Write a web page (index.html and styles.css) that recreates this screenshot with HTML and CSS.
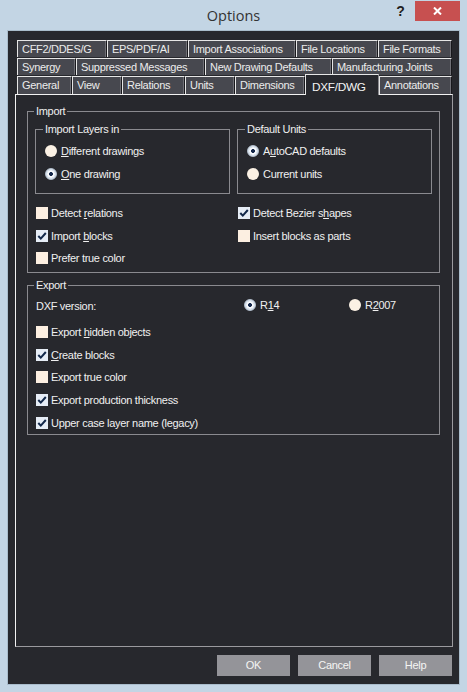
FILE: index.html
```html
<!DOCTYPE html>
<html>
<head>
<meta charset="utf-8">
<title>Options</title>
<link rel="stylesheet" href="styles.css">
</head>
<body>
<div class="window">
  <div class="titlebar">
    <div></div>
    <div class="title">Options</div>
    <div class="controls">
      <span class="help">?</span>
      <span class="close"><svg width="9" height="8" viewBox="0 0 9 8"><path d="M1 0.5 L8 7.5 M8 0.5 L1 7.5" stroke="#fff" stroke-width="2" fill="none"/></svg></span>
    </div>
  </div>
  <div class="client">
    <div class="tabstrip">
      <div class="tabrow">
        <div class="tab w90">CFF2/DDES/G</div>
        <div class="tab w81">EPS/PDF/AI</div>
        <div class="tab w108">Import Associations</div>
        <div class="tab w82">File Locations</div>
        <div class="tab w74">File Formats</div>
      </div>
      <div class="tabrow">
        <div class="tab w59">Synergy</div>
        <div class="tab w129">Suppressed Messages</div>
        <div class="tab w127">New Drawing Defaults</div>
        <div class="tab w120">Manufacturing Joints</div>
      </div>
      <div class="tabrow last">
        <div class="tab w55">General</div>
        <div class="tab w50">View</div>
        <div class="tab w63">Relations</div>
        <div class="tab w50">Units</div>
        <div class="tab w70">Dimensions</div>
        <div class="tab w74 selected">DXF/DWG</div>
        <div class="tab w73">Annotations</div>
      </div>
    </div>
    <div class="panel">
      <div class="group import">
        <span class="glabel">Import</span>
        <div class="subgroups">
          <div class="group sub">
            <span class="glabel">Import Layers in</span>
            <div class="opt"><span class="radio"></span><span><u>D</u>ifferent drawings</span></div>
            <div class="opt"><span class="radio on"></span><span><u>O</u>ne drawing</span></div>
          </div>
          <div class="group sub">
            <span class="glabel">Default Units</span>
            <div class="opt"><span class="radio on"></span><span>A<u>u</u>toCAD defaults</span></div>
            <div class="opt"><span class="radio"></span><span>Current units</span></div>
          </div>
        </div>
        <div class="checks">
          <div class="chk"><span class="box"></span><span>Detect <u>r</u>elations</span></div>
          <div class="chk"><span class="box on"><svg width="12" height="12" viewBox="0 0 12 12"><path d="M2.3 6 L4.8 8.6 L9.8 3" stroke="#12284a" stroke-width="2" fill="none"/></svg></span><span>Detect Bezier s<u>h</u>apes</span></div>
          <div class="chk"><span class="box on"><svg width="12" height="12" viewBox="0 0 12 12"><path d="M2.3 6 L4.8 8.6 L9.8 3" stroke="#12284a" stroke-width="2" fill="none"/></svg></span><span>Import <u>b</u>locks</span></div>
          <div class="chk"><span class="box"></span><span>Insert blocks as parts</span></div>
          <div class="chk"><span class="box"></span><span>Prefer true color</span></div>
        </div>
      </div>
      <div class="group export">
        <span class="glabel">Export</span>
        <div class="dxfrow">
          <span>DXF version:</span>
          <div class="opt"><span class="radio on"></span><span>R<u>1</u>4</span></div>
          <div class="opt"><span class="radio"></span><span>R<u>2</u>007</span></div>
        </div>
        <div class="chk"><span class="box"></span><span>Export <u>h</u>idden objects</span></div>
        <div class="chk"><span class="box on"><svg width="12" height="12" viewBox="0 0 12 12"><path d="M2.3 6 L4.8 8.6 L9.8 3" stroke="#12284a" stroke-width="2" fill="none"/></svg></span><span><u>C</u>reate blocks</span></div>
        <div class="chk"><span class="box"></span><span>Export true color</span></div>
        <div class="chk"><span class="box on"><svg width="12" height="12" viewBox="0 0 12 12"><path d="M2.3 6 L4.8 8.6 L9.8 3" stroke="#12284a" stroke-width="2" fill="none"/></svg></span><span>Export production thickness</span></div>
        <div class="chk"><span class="box on"><svg width="12" height="12" viewBox="0 0 12 12"><path d="M2.3 6 L4.8 8.6 L9.8 3" stroke="#12284a" stroke-width="2" fill="none"/></svg></span><span>Upper case layer name (legacy)</span></div>
      </div>
    </div>
    <div class="buttons">
      <div class="btn">OK</div>
      <div class="btn">Cancel</div>
      <div class="btn">Help</div>
    </div>
  </div>
</div>
</body>
</html>
```
FILE: styles.css
```css
html, body {
  margin: 0;
  padding: 0;
  background: #c3d5e4;
}
.window {
  width: 467px;
  height: 692px;
  background: #c3d5e4;
  font-family: "Liberation Sans", Arial, sans-serif;
  font-size: 11px;
  letter-spacing: -0.3px;
  color: #f0f0f0;
  overflow: hidden;
}
.titlebar {
  height: 31px;
  display: grid;
  grid-template-columns: 1fr auto 1fr;
}
.title {
  font-family: "Open Sans", "Noto Sans", sans-serif;
  font-size: 14.5px;
  letter-spacing: 0;
  color: #333;
  line-height: 31px;
}
.controls {
  display: flex;
  justify-content: flex-end;
  align-items: flex-start;
  padding-right: 7px;
  padding-top: 1px;
}
.help {
  width: 29px;
  height: 20px;
  text-align: center;
  font-weight: bold;
  font-size: 14px;
  line-height: 20px;
  color: #1e1e1e;
  letter-spacing: 0;
}
.close {
  width: 45px;
  height: 20px;
  background: #c75050;
  display: flex;
  align-items: center;
  justify-content: center;
}
.client {
  margin: 0 8px;
  height: 653px;
  box-sizing: border-box;
  background: #27282d;
  padding: 9px 6px 0 7px;
  box-shadow: 0 0 0 1px #a9bccb;
}
.tabstrip {
  margin-left: 2px;
}
.tabrow {
  display: flex;
  height: 18px;
  align-items: flex-start;
}
.tabrow.last {
  height: 19px;
  margin-bottom: -1px;
}
.tab {
  box-sizing: border-box;
  height: 17px;
  background: #47484f;
  border-top: 1px solid #e6e6e6;
  border-left: 1px solid #e6e6e6;
  border-right: 1px solid #18181c;
  box-shadow: inset -1px 0 #707076;
  padding-left: 4px;
  line-height: 16px;
  white-space: nowrap;
  color: #ececec;
}
.tabrow.last .tab {
  height: 18px;
}
.tabrow.last .tab.selected {
  height: 21px;
  margin-top: -2px;
  background: #27282d;
  border-right: 1px solid #8a8a8f;
  box-shadow: none;
  padding: 4px 0 0 6px;
  font-size: 11.8px;
  position: relative;
  z-index: 1;
  color: #f4f4f4;
}
.w50 { width: 50px; }
.w55 { width: 55px; }
.w59 { width: 59px; }
.w63 { width: 63px; }
.w70 { width: 70px; }
.w73 { width: 73px; }
.w74 { width: 74px; }
.w81 { width: 81px; }
.w82 { width: 82px; }
.w90 { width: 90px; }
.w108 { width: 108px; }
.w120 { width: 120px; }
.w127 { width: 127px; }
.w129 { width: 129px; }

.panel {
  box-sizing: border-box;
  height: 553px;
  border-top: 1px solid #f2f2f2;
  border-left: 1px solid #f2f2f2;
  border-right: 1px solid #9a9a9e;
  border-bottom: 1px solid #9a9a9e;
  padding: 16px 12px 0 11px;
}
.group {
  position: relative;
  box-sizing: border-box;
  border: 1px solid #8a8a8f;
}
.glabel {
  position: absolute;
  top: -7px;
  left: 6px;
  padding: 0 2px;
  line-height: 13px;
  background: #27282d;
  white-space: nowrap;
}
.sub .glabel {
  left: 7px;
}
.import {
  height: 162px;
  padding: 17px 7px 0 7px;
}
.subgroups {
  display: grid;
  grid-template-columns: 195px 195px;
  column-gap: 7px;
}
.sub {
  height: 65px;
  padding: 9.5px 0 0 9px;
}
.opt {
  display: flex;
  align-items: center;
  gap: 4px;
  height: 23px;
  white-space: nowrap;
}
.radio {
  box-sizing: border-box;
  width: 12px;
  height: 12px;
  border-radius: 50%;
  background: #fbf1e4;
  flex: none;
}
.radio.on {
  background: radial-gradient(circle, #15284a 0 1.8px, #fafcff 2.2px 3.4px, #d9e2ec 3.8px);
  border: 1px solid #b7c3d1;
}
.checks {
  display: grid;
  grid-template-columns: 195px 195px;
  column-gap: 7px;
  margin-top: 8px;
}
.checks .chk {
  height: 22.5px;
  padding-left: 1px;
}
.chk {
  display: flex;
  align-items: center;
  gap: 3px;
  height: 22.75px;
  white-space: nowrap;
}
.box {
  box-sizing: border-box;
  width: 12px;
  height: 12px;
  background: #fcefe1;
  flex: none;
  display: flex;
}
.box.on {
  background: #e6edf6;
}
.export {
  margin-top: 12px;
  height: 150px;
  padding: 10px 0 0 8px;
}
.dxfrow {
  display: grid;
  grid-template-columns: 208px 105px auto;
  align-items: center;
  height: 20px;
  margin-bottom: 4.5px;
}
.dxfrow .opt {
  height: 20px;
  margin-top: -3px;
}
u {
  text-decoration: underline;
  text-underline-offset: 1px;
}
.buttons {
  display: flex;
  justify-content: flex-end;
  gap: 8px;
  margin-top: 8px;
  margin-right: 1px;
}
.btn {
  width: 73px;
  height: 21px;
  background: #949499;
  color: #f4f4f4;
  text-align: center;
  line-height: 21px;
}
```
